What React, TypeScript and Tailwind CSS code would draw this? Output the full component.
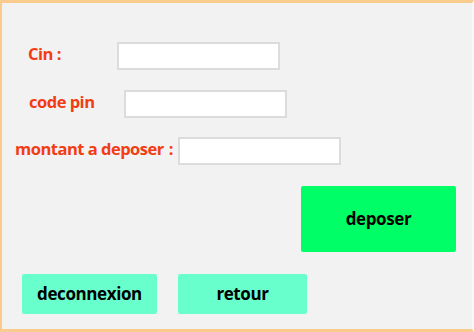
export default function App() {
  const labelCls = "text-[16.5px] font-bold tracking-[-0.5px] text-[#f23c14] leading-none whitespace-nowrap -mt-[3px]";
  const inputCls = "w-[163px] h-[28px] bg-white border-2 border-[#dcdcdc] outline-none px-1 text-sm";
  const btnText = "text-[17px] font-bold tracking-[-0.4px] text-black";

  return (
    <div
      className="w-[474px] h-[332px] bg-[#f2f2f2] border-t-[3px] border-l-2 border-b-[3px] border-r-2 border-[#f9cb8d] border-r-[#f8f8f8] flex flex-col"
      style={{ fontFamily: '"Open Sans", "Noto Sans", sans-serif' }}
    >
      <div className="flex items-center mt-[39px] ml-[26px]">
        <span className={`${labelCls} w-[89px]`}>Cin :</span>
        <input className={inputCls} />
      </div>

      <div className="flex items-center mt-[20px] ml-[27px]">
        <span className={`${labelCls} w-[95px]`}>code pin</span>
        <input className={inputCls} />
      </div>

      <div className="flex items-center mt-[19px] ml-[13px]">
        <span className={`${labelCls} w-[163px]`}>
          montant a deposer<span className="ml-[5px]">:</span>
        </span>
        <input className={inputCls} />
      </div>

      <button className={`mt-[21px] ml-[299px] w-[155px] h-[66px] bg-[#00ff66] rounded-[2px] ${btnText}`}>
        deposer
      </button>

      <div className="flex mt-[22px] ml-[20px] gap-[21px]">
        <button className={`w-[135px] h-[40px] bg-[#69ffcc] rounded-[2px] ${btnText}`}>deconnexion</button>
        <button className={`w-[129px] h-[40px] bg-[#69ffcc] rounded-[2px] ${btnText}`}>retour</button>
      </div>
    </div>
  );
}
